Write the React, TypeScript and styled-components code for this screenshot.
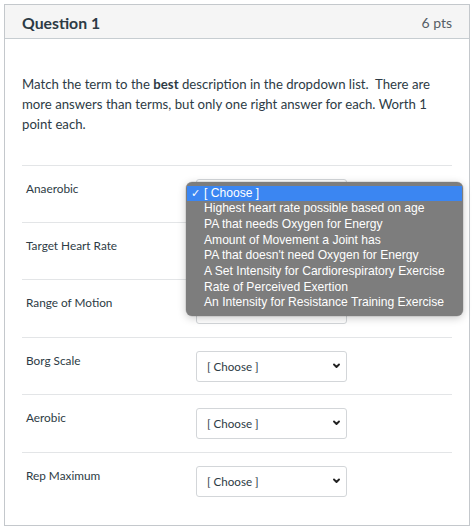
import React from "react";
import styled, { createGlobalStyle } from "styled-components";

const Global = createGlobalStyle`
  html, body { margin: 0; padding: 0; background: #ffffff; }
  body { font-family: Lato, "Noto Sans", sans-serif; color: #2d3b45; }
  * { box-sizing: border-box; }
`;

const Page = styled.div`
  width: 474px;
  height: 532px;
  padding: 4px;
`;

const Card = styled.section`
  border: 1px solid #c4c8cc;
  height: 522px;
  display: flex;
  flex-direction: column;
`;

const Header = styled.header`
  height: 37px;
  background: #f5f5f5;
  border-bottom: 1px solid #c7cdd1;
  display: flex;
  align-items: center;
  justify-content: space-between;
  padding: 2px 17px 0 17px;
`;

const Title = styled.h2`
  margin: 0;
  font-size: 15.8px;
  font-weight: 700;
  color: #2d3b45;
`;

const Points = styled.span`
  font-size: 14px;
  color: #565e66;
`;

const Body = styled.div`
  padding: 36px 17px 16px 17px;
`;

const Prompt = styled.p`
  margin: 0 0 30px 0;
  font-size: 13.2px;
  line-height: 19.8px;
  color: #2d3b45;
`;

const Row = styled.div`
  display: grid;
  grid-template-columns: 170px 151px;
  border-top: 1px solid #e3e5e7;
  padding: 13px 0 12.4px 4px;
`;

const Label = styled.div`
  font-size: 11.8px;
  line-height: 20px;
  color: #2d3b45;
`;

const SelectWrap = styled.div`
  position: relative;
  height: 31px;
`;

const SelectBox = styled.div`
  height: 31px;
  border: 1px solid #d3d6d9;
  border-radius: 3px;
  background: #fff;
  display: flex;
  align-items: center;
  padding: 0 10px;
  font-size: 11.6px;
  color: #2d3b45;
`;

const Chevron = styled.svg`
  position: absolute;
  right: 7px;
  top: 12px;
  width: 7px;
  height: 6px;
`;

const Popup = styled.ul`
  position: absolute;
  left: -10px;
  top: 3px;
  width: 277px;
  margin: 0;
  padding: 4px 1px 5px 1px;
  list-style: none;
  background: #7d7d7d;
  border-radius: 6px;
  box-shadow: 0 2px 8px rgba(0, 0, 0, 0.22), 0 0 0 0.5px rgba(0, 0, 0, 0.15);
  z-index: 5;
`;

const Option = styled.li<{ $active?: boolean }>`
  position: relative;
  height: 15.7px;
  line-height: 15.7px;
  padding-left: 17px;
  font-family: "Liberation Sans", Arial, sans-serif;
  font-size: 12.1px;
  color: #ffffff;
  background: ${(p) => (p.$active ? "#3b86f2" : "transparent")};
  white-space: nowrap;
`;

const Check = styled.span`
  position: absolute;
  left: 4px;
  top: 0;
  font-size: 11px;
`;

const options = [
  "[ Choose ]",
  "Highest heart rate possible based on age",
  "PA that needs Oxygen for Energy",
  "Amount of Movement a Joint has",
  "PA that doesn't need Oxygen for Energy",
  "A Set Intensity for Cardiorespiratory Exercise",
  "Rate of Perceived Exertion",
  "An Intensity for Resistance Training Exercise",
];

const terms = [
  "Anaerobic",
  "Target Heart Rate",
  "Range of Motion",
  "Borg Scale",
  "Aerobic",
  "Rep Maximum",
];

function Select({ open }: { open?: boolean }) {
  return (
    <SelectWrap>
      <SelectBox>[ Choose ]</SelectBox>
      <Chevron viewBox="0 0 7 6">
        <path d="M1 1.5 L3.5 4 L6 1.5" fill="none" stroke="#222" strokeWidth="1.9" strokeLinecap="round" strokeLinejoin="round" />
      </Chevron>
      {open && (
        <Popup>
          {options.map((o, i) => (
            <Option key={o} $active={i === 0}>
              {i === 0 && <Check>✓</Check>}
              {o}
            </Option>
          ))}
        </Popup>
      )}
    </SelectWrap>
  );
}

export default function App() {
  return (
    <Page>
      <Global />
      <Card>
        <Header>
          <Title>Question 1</Title>
          <Points>6 pts</Points>
        </Header>
        <Body>
          <Prompt>
            Match the term to the <b>best</b> description in the dropdown list.&nbsp; There are more answers than terms, but only one right answer for each. Worth 1 point each.
          </Prompt>
          {terms.map((t, i) => (
            <Row key={t}>
              <Label>{t}</Label>
              <Select open={i === 0} />
            </Row>
          ))}
        </Body>
      </Card>
    </Page>
  );
}
